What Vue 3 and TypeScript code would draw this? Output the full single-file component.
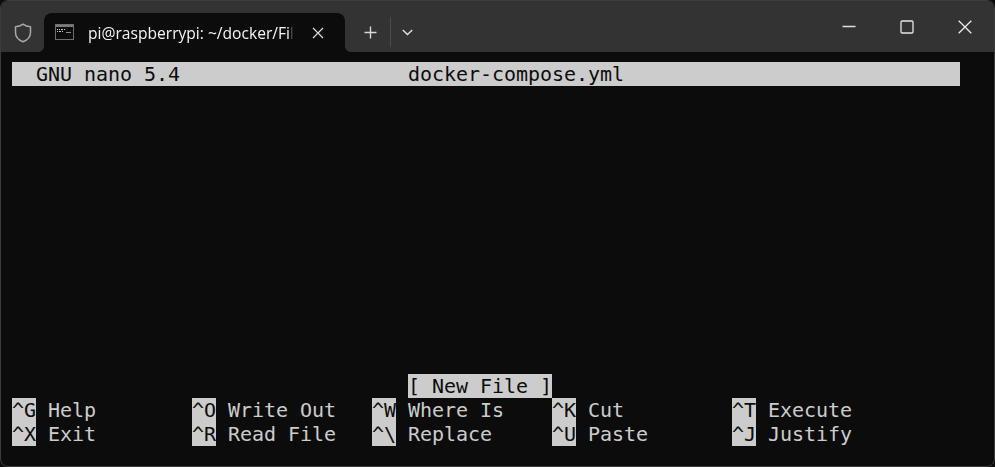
<script setup lang="ts">
interface Shortcut { key: string; label: string }
const topRow: Shortcut[] = [
  { key: '^G', label: 'Help' },
  { key: '^O', label: 'Write Out' },
  { key: '^W', label: 'Where Is' },
  { key: '^K', label: 'Cut' },
  { key: '^T', label: 'Execute' },
]
const bottomRow: Shortcut[] = [
  { key: '^X', label: 'Exit' },
  { key: '^R', label: 'Read File' },
  { key: '^\\', label: 'Replace' },
  { key: '^U', label: 'Paste' },
  { key: '^J', label: 'Justify' },
]
const rows = [topRow, bottomRow]
</script>

<template>
  <div class="window">
    <header class="titlebar">
      <div class="shield">
        <svg width="18" height="20" viewBox="0 0 18 20" fill="none">
          <path d="M9 1.2 C6.8 2.9 4.2 3.7 1.5 3.8 V9.5 C1.5 13.8 4.2 16.9 9 18.8 C13.8 16.9 16.5 13.8 16.5 9.5 V3.8 C13.8 3.7 11.2 2.9 9 1.2 Z" stroke="#a8a8a8" stroke-width="1.5" stroke-linejoin="round"/>
        </svg>
      </div>
      <div class="tab">
        <svg class="tab-icon" width="19" height="16" viewBox="0 0 19 16">
          <rect x="0.5" y="0.5" width="18" height="15" fill="#0c0c0c" stroke="#6e6e6e"/>
          <rect x="1" y="1" width="17" height="2" fill="#7a7a7a"/>
          <path d="M2 5h1v1H2zM4 5h1v1H4zM6 5h2v1H6zM9 5h1v1H9zM2 7h1v1H2zM4 7h2v1H4zM7 7h1v1H7z" fill="#c8c8c8"/>
          <rect x="11" y="8" width="5" height="1" fill="#8a8a8a"/>
        </svg>
        <span class="tab-title">pi@raspberrypi: ~/docker/File</span>
        <svg class="tab-close" width="12" height="12" viewBox="0 0 12 12">
          <path d="M1 1 L11 11 M11 1 L1 11" stroke="#dcdcdc" stroke-width="1.2" fill="none"/>
        </svg>
      </div>
      <div class="new-tab">
        <svg width="13" height="13" viewBox="0 0 13 13">
          <path d="M6.5 0.5 V12.5 M0.5 6.5 H12.5" stroke="#d8d8d8" stroke-width="1.4" fill="none"/>
        </svg>
      </div>
      <div class="divider"></div>
      <div class="dropdown">
        <svg width="11" height="7" viewBox="0 0 11 7">
          <path d="M0.8 1 L5.5 5.6 L10.2 1" stroke="#e2e2e2" stroke-width="1.4" fill="none"/>
        </svg>
      </div>
      <div class="spacer"></div>
      <div class="controls">
        <button class="control">
          <svg width="14" height="14" viewBox="0 0 14 14"><path d="M0.5 6.5 H13.5" stroke="#dedede" stroke-width="1.5"/></svg>
        </button>
        <button class="control">
          <svg width="14" height="14" viewBox="0 0 14 14"><rect x="1" y="1" width="12" height="12" rx="1.2" stroke="#e6e6e6" stroke-width="1.3" fill="none"/></svg>
        </button>
        <button class="control">
          <svg width="14" height="14" viewBox="0 0 14 14"><path d="M0.7 0.7 L13.3 13.3 M13.3 0.7 L0.7 13.3" stroke="#ececec" stroke-width="1.3" fill="none"/></svg>
        </button>
      </div>
    </header>

    <main class="terminal">
      <div class="cell-row nano-title">
        <span class="col-version">GNU nano 5.4</span>
        <span>docker-compose.yml</span>
      </div>
      <div class="buffer"></div>
      <div class="cell-row status-row"><span class="status">[ New File ]</span></div>
      <div v-for="(row, i) in rows" :key="i" class="cell-row">
        <div v-for="item in row" :key="item.key" class="shortcut">
          <span class="key">{{ item.key }}</span>
          <span class="label">{{ item.label }}</span>
        </div>
      </div>
    </main>
  </div>
</template>

<style>
html, body { margin: 0; background: #0c0c0c; }
</style>

<style scoped>
.window {
  width: 995px;
  height: 467px;
  box-sizing: border-box;
  display: flex;
  flex-direction: column;
  background: #0c0c0c;
  border: 1px solid #3c3c3c;
  border-radius: 8px;
  overflow: hidden;
}
.titlebar {
  height: 51px;
  flex: none;
  display: flex;
  align-items: flex-end;
  background: #333333;
}
.shield {
  width: 43px;
  height: 39px;
  flex: none;
  display: flex;
  align-items: center;
  justify-content: center;
  box-sizing: border-box;
  padding-left: 1px;
}
.tab {
  position: relative;
  width: 301px;
  height: 39px;
  flex: none;
  display: flex;
  align-items: center;
  background: #0c0c0c;
  border-radius: 8px 8px 0 0;
  box-sizing: border-box;
  padding-left: 11px;
}
.tab::before,
.tab::after {
  content: "";
  position: absolute;
  bottom: 0;
  width: 6px;
  height: 6px;
}
.tab::before {
  left: -6px;
  background: radial-gradient(circle at 0 0, #333333 5.5px, #0c0c0c 6.5px);
}
.tab::after {
  right: -6px;
  background: radial-gradient(circle at 100% 0, #333333 5.5px, #0c0c0c 6.5px);
}
.tab-icon { flex: none; margin-top: -2px; }
.tab-title {
  width: 205px;
  margin-left: 14px;
  flex: none;
  overflow: hidden;
  white-space: nowrap;
  font: 500 15.6px "Open Sans", sans-serif;
  color: #f5f5f5;
  -webkit-mask-image: linear-gradient(to right, #000 98%, transparent);
  mask-image: linear-gradient(to right, #000 98%, transparent);
}
.tab-close { flex: none; margin-left: 19px; }
.new-tab {
  width: 45px;
  height: 39px;
  padding-left: 5px;
  box-sizing: border-box;
  flex: none;
  display: flex;
  align-items: center;
  justify-content: center;
}
.divider {
  width: 1px;
  height: 30px;
  margin-bottom: 5px;
  flex: none;
  background: #4a4a4a;
}
.dropdown {
  width: 33px;
  height: 39px;
  flex: none;
  display: flex;
  align-items: center;
  justify-content: center;
}
.spacer { flex: 1; }
.controls { display: flex; height: 51px; }
.control {
  width: 58px;
  height: 51px;
  padding: 0;
  border: 0;
  background: transparent;
  display: flex;
  align-items: center;
  justify-content: center;
}
.terminal {
  flex: 1;
  display: flex;
  flex-direction: column;
  padding: 10px 0 0 11px;
  font: 20px/24px "DejaVu Sans Mono", monospace;
  letter-spacing: -0.04px;
  color: #cccccc;
}
.cell-row {
  height: 24px;
  display: flex;
  white-space: pre;
}
.nano-title {
  width: 948px;
  background: #cccccc;
  color: #0c0c0c;
  padding-left: 24px;
  box-sizing: border-box;
}
.col-version { width: 372px; }
.buffer { height: 288px; flex: none; }
.status-row { padding-left: 396px; }
.status { background: #cccccc; color: #0c0c0c; }
.shortcut { width: 180px; display: flex; gap: 12px; }
.key { background: #cccccc; color: #0c0c0c; width: 24px; }
.label { color: #cccccc; }
</style>
